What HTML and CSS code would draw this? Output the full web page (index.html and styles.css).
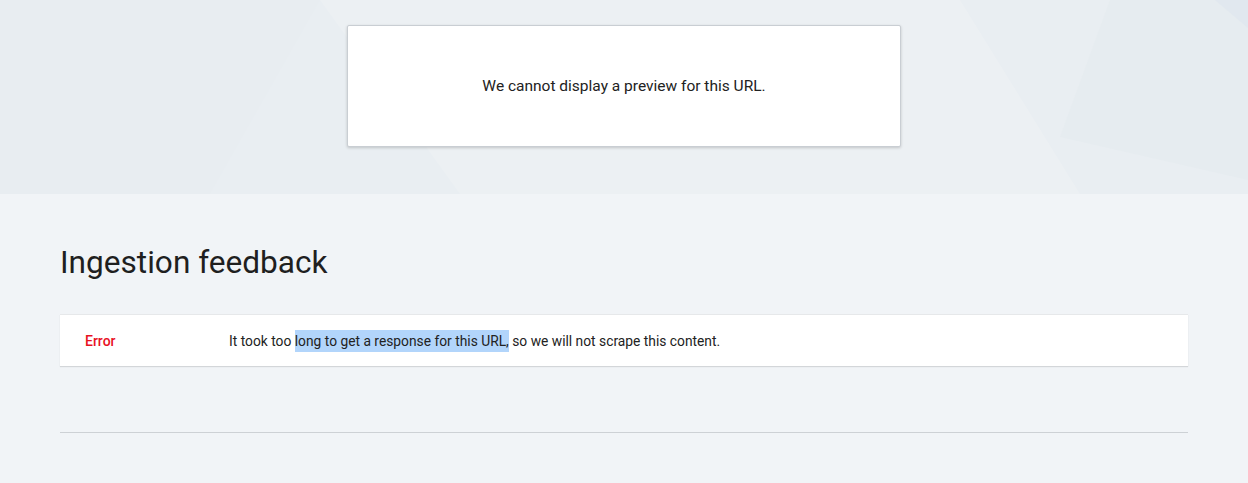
FILE: index.html
```html
<!DOCTYPE html>
<html lang="en">
<head>
  <meta charset="UTF-8">
  <meta name="viewport" content="width=device-width, initial-scale=1.0">
  <title>Ingestion feedback</title>
  <link rel="stylesheet" href="styles.css">
</head>
<body>
  <!-- 상단 미리보기 영역 -->
  <div class="hero">
    <svg class="hero-bg" width="1248" height="194" viewBox="0 0 1248 194" preserveAspectRatio="none">
      <polygon points="0,0 320,0 210,194 0,194" fill="#e8edf1" />
      <polygon points="320,0 960,0 1080,194 460,194" fill="#ecf0f3" />
      <polygon points="1110,0 1248,0 1248,180 1060,137" fill="#e6ecf0" />
      <polygon points="1215,0 1248,0 1248,28" fill="#e1e8ef" />
    </svg>
    <div class="preview-card">
      <p class="preview-text">We cannot display a preview for this URL.</p>
    </div>
  </div>

  <div class="content">
    <h1 class="title">Ingestion feedback</h1>

    <div class="feedback-row">
      <span class="feedback-level">Error</span>
      <span class="feedback-message">It took too <span class="selected">long to get a response for this URL,</span> so we will not scrape this content.</span>
    </div>

    <hr class="divider">
  </div>
</body>
</html>
```

FILE: styles.css
```css
body {
    margin: 0;
    font-family: Roboto, "Liberation Sans", sans-serif;
    color: #222;
    background: #f1f4f7;
}

.hero {
    position: relative;
    height: 194px;
    padding-top: 25px;
    box-sizing: border-box;
    background: #e9eef2;
    overflow: hidden;
}
.hero-bg {
    position: absolute; /* 배경 도형 */
    left: 0;
    top: 0;
}
.preview-card {
    position: relative;
    width: 552px;
    height: 120px;
    margin: 0 auto;
    display: flex;
    align-items: center;
    justify-content: center;
    background: #fff;
    border: 1px solid #c9ced3;
    border-radius: 2px;
    box-shadow: 0 1px 3px rgba(0, 0, 0, 0.18);
}
.preview-text {
    margin: 0;
    font-size: 15.5px;
    color: #222;
}

.content {
    padding: 0 60px;
}
.title {
    margin: 0;
    padding-top: 50px;
    font-size: 31.6px;
    font-weight: 400;
    line-height: 38px;
    color: #1f1f1f;
}

.feedback-row {
    display: flex;
    align-items: center;
    height: 51px;
    margin-top: 32px;
    padding-left: 25px;
    background: #fff;
    border-top: 1px solid #e6e8ea;
    box-shadow: 0 1px 1px rgba(0, 0, 0, 0.12);
    font-size: 13.8px;
}
.feedback-level {
    width: 144px;
    color: #e8111f;
    font-weight: 500;
    font-size: 14px;
}
.feedback-message {
    color: #222;
}
.selected {
    background: #b2d5fb; /* 드래그 선택 표시 */
    padding: 3px 0;
}

.divider {
    margin: 66px 0 0;
    border: none;
    border-top: 1px solid #cdd1d5;
}
```
